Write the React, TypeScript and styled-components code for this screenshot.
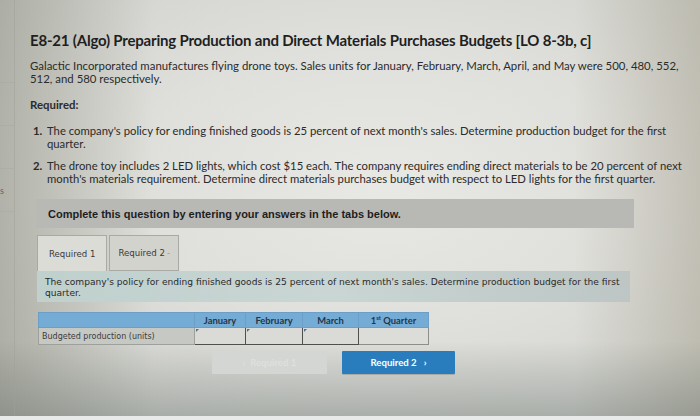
import styled, { createGlobalStyle } from 'styled-components';

const GlobalStyle = createGlobalStyle`
  html, body {
    margin: 0;
    padding: 0;
    width: 700px;
    height: 420px;
    overflow: hidden;
  }
  body {
    font-family: Lato, "Open Sans", "Liberation Sans", sans-serif;
    color: #2a2a2a;
  }
`;

const months = [
    { name: 'January', w: 51 },
    { name: 'February', w: 57 },
    { name: 'March', w: 56 },
];

export default function App() {
    return (
        <>
            <GlobalStyle />
            <Screen>
                <SideRail>
                    <RailCell />
                    <RailCell />
                    <RailCell />
                    <RailCell>s</RailCell>
                </SideRail>
                <Page>
                    <Title>E8-21 (Algo) Preparing Production and Direct Materials Purchases Budgets [LO 8-3b, c]</Title>
                    <Intro>
                        Galactic Incorporated manufactures flying drone toys. Sales units for January, February, March, April, and May were 500, 480, 552,
                        512, and 580 respectively.
                    </Intro>
                    <SubHead>Required:</SubHead>
                    <List>
                        <Item>
                            <Num>1.</Num>
                            <span>The company's policy for ending finished goods is 25 percent of next month's sales. Determine production budget for the first quarter.</span>
                        </Item>
                        <Item>
                            <Num>2.</Num>
                            <span>The drone toy includes 2 LED lights, which cost $15 each. The company requires ending direct materials to be 20 percent of next month's materials requirement. Determine direct materials purchases budget with respect to LED lights for the first quarter.</span>
                        </Item>
                    </List>
                    <Banner>Complete this question by entering your answers in the tabs below.</Banner>
                    <Tabs>
                        <Tab $active>Required 1</Tab>
                        <Tab>Required 2 <Dash>-</Dash></Tab>
                    </Tabs>
                    <Prompt>
                        The company's policy for ending finished goods is 25 percent of next month's sales. Determine production budget for the first quarter.
                    </Prompt>
                    <Table>
                        <thead>
                            <tr>
                                <HeadCell $w={156} />
                                {months.map((m) => (
                                    <HeadCell key={m.name} $w={m.w}>{m.name}</HeadCell>
                                ))}
                                <HeadCell $w={70}>1<sup>st</sup> Quarter</HeadCell>
                            </tr>
                        </thead>
                        <tbody>
                            <tr>
                                <LabelCell>Budgeted production (units)</LabelCell>
                                {months.map((m) => (
                                    <InputCell key={m.name}><Marker /></InputCell>
                                ))}
                                <TotalCell />
                            </tr>
                        </tbody>
                    </Table>
                    <NavRow>
                        <NavButton disabled>&lsaquo;&nbsp;&nbsp;Required 1</NavButton>
                        <NavButton>Required 2&nbsp;&nbsp;&nbsp;&rsaquo;</NavButton>
                    </NavRow>
                </Page>
            </Screen>
        </>
    );
}

const Screen = styled.div`
  position: relative;
  width: 700px;
  height: 420px;
  display: flex;
  background:
    linear-gradient(180deg, rgba(0,0,0,0) 82%, rgba(90,100,95,0.35) 100%),
    linear-gradient(90deg, rgba(90,90,70,0.3) 0%, rgba(0,0,0,0) 22%, rgba(0,0,0,0) 82%, rgba(120,110,80,0.25) 100%),
    radial-gradient(ellipse at 55% 45%, #e8e8e4 0%, #dfdfdb 45%, #cdcfca 100%);
  border-bottom: 4px solid #e8eaea;
  box-sizing: border-box;
  overflow: hidden;
`;

const SideRail = styled.div`
  width: 14px;
  flex-shrink: 0;
  display: flex;
  flex-direction: column;
  padding-top: 40px;
  border-right: 1px solid rgba(160,160,150,0.5);
`;

const RailCell = styled.div`
  height: 42px;
  border-bottom: 1px solid rgba(170,170,160,0.6);
  font-size: 9px;
  color: #666;
  display: flex;
  align-items: center;
`;

const Page = styled.div`
  flex: 1;
  padding: 31px 0 0 15px;
  display: flex;
  flex-direction: column;
  align-items: flex-start;
`;

const Title = styled.h1`
  margin: 0;
  font-size: 15px;
  font-weight: 700;
  color: #1f1f1f;
  letter-spacing: -0.2px;
  white-space: nowrap;
`;

const Intro = styled.p`
  margin: 11px 0 0;
  width: 666px;
  font-size: 11.4px;
  line-height: 12.5px;
  color: #2b2b2b;
`;

const SubHead = styled.div`
  margin-top: 13px;
  font-size: 11.4px;
  font-weight: 700;
  color: #2b2b2b;
`;

const List = styled.ol`
  list-style: none;
  margin: 14px 0 0;
  padding: 0 0 0 3px;
  width: 660px;
  display: flex;
  flex-direction: column;
  gap: 10px;
`;

const Item = styled.li`
  display: flex;
  font-size: 11.3px;
  line-height: 12.5px;
  color: #2b2b2b;
`;

const Num = styled.span`
  width: 14px;
  flex-shrink: 0;
  font-weight: 700;
`;

const Banner = styled.div`
  margin: 14px 0 0 6px;
  width: 598px;
  height: 29px;
  box-sizing: border-box;
  padding: 0 12px;
  display: flex;
  align-items: center;
  background: #b8b9b5;
  font-family: "Liberation Sans", Arial, sans-serif;
  font-size: 11px;
  font-weight: 700;
  color: #1e1e1e;
`;

const Tabs = styled.div`
  margin: 7px 0 0 7px;
  display: flex;
  gap: 2px;
  align-items: flex-start;
`;

const Tab = styled.div<{ $active?: boolean }>`
  height: ${(p) => (p.$active ? '43px' : '36px')};
  padding: 0 ${(p) => (p.$active ? '11px' : '8px')};
  box-sizing: border-box;
  display: flex;
  align-items: center;
  border: 1px solid #a9aaa5;
  border-bottom: ${(p) => (p.$active ? 'none' : '1px solid #a9aaa5')};
  background: ${(p) => (p.$active ? '#dcdcd6' : '#d3d3ce')};
  font-family: "DejaVu Sans", "Liberation Sans", sans-serif;
  font-size: 8.6px;
  color: #3a3a3a;
  padding-bottom: ${(p) => (p.$active ? '7px' : '0')};
`;

const Dash = styled.span`
  color: #999;
  margin-left: 2px;
`;

const Prompt = styled.div`
  margin: -7px 0 0 7px;
  width: 593px;
  height: 31px;
  box-sizing: border-box;
  padding: 6px 8px 0 8px;
  background: linear-gradient(90deg, #bfd0cd 0%, #c9d6d4 50%, #bdc6c4 100%);
  font-family: "DejaVu Sans", "Liberation Sans", sans-serif;
  font-size: 9.1px;
  line-height: 10.5px;
  color: #2a2a2a;
`;

const Table = styled.table`
  margin: 10px 0 0 8px;
  border-collapse: collapse;
  table-layout: fixed;
  font-size: 9.4px;
`;

const HeadCell = styled.th<{ $w?: number }>`
  width: ${(p) => (p.$w ? `${p.$w}px` : 'auto')};
  height: 15px;
  padding: 0;
  box-sizing: border-box;
  background: #75acd6;
  border: 1px solid #6b9fc7;
  font-weight: 700;
  color: #253548;
  white-space: nowrap;
  sup {
    font-size: 6px;
    line-height: 0;
  }
`;

const LabelCell = styled.td`
  height: 17px;
  padding: 0 3px;
  box-sizing: border-box;
  background: #c6c8c4;
  border: 1px solid #9ea09b;
  font-family: "DejaVu Sans", "Liberation Sans", sans-serif;
  font-size: 8px;
  color: #3c3c3c;
  white-space: nowrap;
`;

const InputCell = styled.td`
  position: relative;
  border: 1px solid #4e504d;
  background: #dadbd6;
`;

const Marker = styled.span`
  position: absolute;
  left: 1px;
  top: 1px;
  width: 0;
  height: 0;
  border-left: 3px solid #4d6f94;
  border-bottom: 3px solid transparent;
`;

const TotalCell = styled.td`
  border: 1px solid #8c8e8a;
  background: #dcddd8;
`;

const NavRow = styled.div`
  margin: 6px 0 0 182px;
  display: flex;
  gap: 15px;
`;

const NavButton = styled.button`
  width: ${(p) => (p.disabled ? '115px' : '113px')};
  height: 23px;
  border: none;
  border-radius: 1px;
  background: ${(p) => (p.disabled ? '#d4d6d3' : '#2a7dbd')};
  color: ${(p) => (p.disabled ? '#dfe0dd' : '#ffffff')};
  font-family: Lato, "Liberation Sans", sans-serif;
  font-size: 9.6px;
  font-weight: 700;
  box-shadow: ${(p) => (p.disabled ? 'none' : '0 1px 0 rgba(0,0,0,0.15)')};
`;
